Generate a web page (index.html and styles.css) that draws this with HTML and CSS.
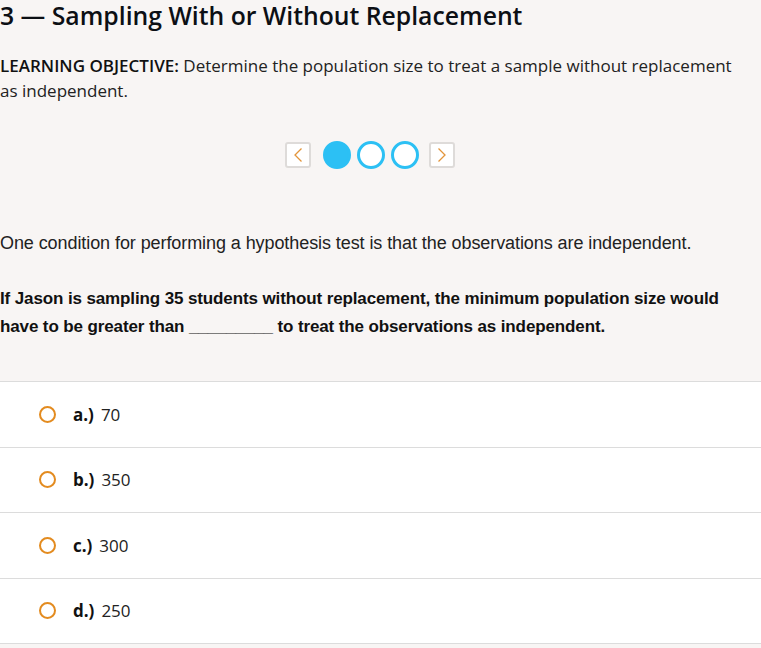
FILE: index.html
```html
<!DOCTYPE html>
<html>
<head>
<meta charset="utf-8">
<link rel="stylesheet" href="styles.css">
</head>
<body>
<div class="top">
  <h1 class="title">3 — Sampling With or Without Replacement</h1>
  <p class="objective"><b>LEARNING OBJECTIVE:</b> Determine the population size to treat a sample without replacement as independent.</p>
  <div class="pager">
    <span class="nav"><svg width="12" height="16" viewBox="0 0 12 16"><path d="M9.5 1.5 L3 8 L9.5 14.5" fill="none" stroke="#e3953a" stroke-width="1.3"/></svg></span>
    <span class="dot filled"></span>
    <span class="dot"></span>
    <span class="dot"></span>
    <span class="nav"><svg width="12" height="16" viewBox="0 0 12 16"><path d="M2.5 1.5 L9 8 L2.5 14.5" fill="none" stroke="#e3953a" stroke-width="1.3"/></svg></span>
  </div>
  <p class="intro">One condition for performing a hypothesis test is that the observations are independent.</p>
  <p class="question">If Jason is sampling 35 students without replacement, the minimum population size would have to be greater than _________ to treat the observations as independent.</p>
</div>
<ul class="options">
  <li class="option"><span class="radio"></span><b class="letter">a.)</b><span class="value">70</span></li>
  <li class="option"><span class="radio"></span><b class="letter">b.)</b><span class="value">350</span></li>
  <li class="option"><span class="radio"></span><b class="letter">c.)</b><span class="value">300</span></li>
  <li class="option"><span class="radio"></span><b class="letter">d.)</b><span class="value">250</span></li>
</ul>
</body>
</html>
```
FILE: styles.css
```css
html, body {
  margin: 0;
  padding: 0;
  background: #f8f5f4;
  color: #111;
  font-family: "Open Sans", "Liberation Sans", sans-serif;
}
.top {
  width: 740px;
  padding: 1px 0 40px 0;
}
.title {
  margin: 0;
  font-size: 24.75px;
  line-height: 30px;
  font-weight: 600;
  color: #0c0f14;
}
.objective {
  margin: 22px 0 0 0;
  font-size: 17px;
  line-height: 25px;
  color: #222;
}
.objective b {
  font-weight: 600;
  color: #111;
}
.pager {
  margin-top: 37px;
  display: flex;
  justify-content: center;
  align-items: center;
  gap: 6px;
  height: 30px;
}
.nav {
  width: 22px;
  height: 22px;
  border: 2px solid #dedbd9;
  border-radius: 3px;
  background: #fff;
  display: flex;
  align-items: center;
  justify-content: center;
}
.nav:first-child { margin-right: 6px; }
.nav:last-child { margin-left: 4px; }
.dot {
  width: 22px;
  height: 22px;
  border: 3px solid #2cc0f4;
  border-radius: 50%;
  background: #fff;
}
.dot.filled {
  background: #2cc0f4;
}
.intro {
  margin: 59px 0 0 0;
  font-family: "Liberation Sans", sans-serif;
  font-size: 18px;
  letter-spacing: -0.08px;
  line-height: 28px;
  color: #222;
}
.question {
  margin: 28px 0 0 0;
  font-family: "Liberation Sans", sans-serif;
  font-weight: 700;
  font-size: 17px;
  letter-spacing: -0.12px;
  line-height: 28px;
  color: #111;
}
.options {
  list-style: none;
  margin: 0;
  padding: 0;
  background: #fff;
  border-top: 1px solid #dcdcdc;
}
.option {
  display: flex;
  align-items: center;
  height: 64.5px;
  border-bottom: 1px solid #dcdcdc;
  padding-left: 39px;
  font-size: 17px;
}
.radio {
  width: 13px;
  height: 13px;
  border: 2.5px solid #e38b1f;
  border-radius: 50%;
  margin-right: 17px;
}
.letter {
  font-weight: 700;
  margin-right: 7px;
  color: #111;
}
.value {
  color: #222;
}
```
